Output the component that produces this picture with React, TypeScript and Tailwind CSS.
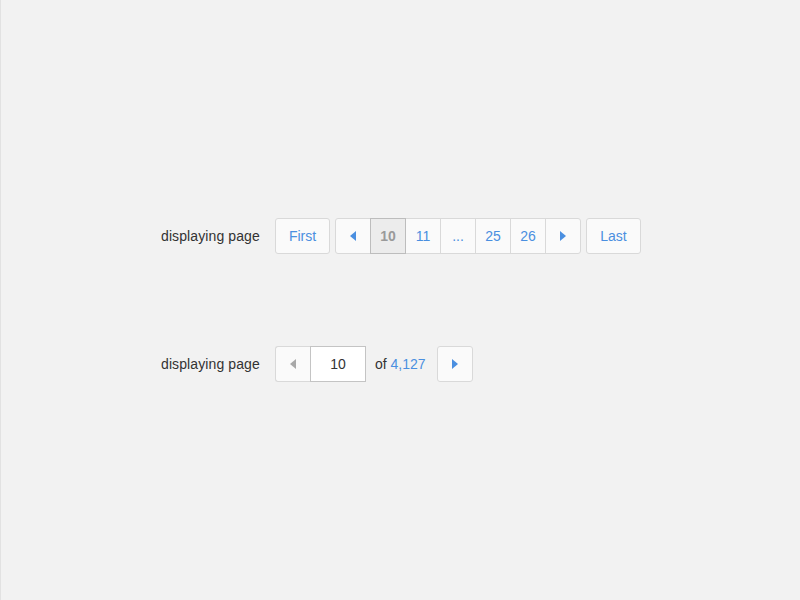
import React from 'react';

const Tri: React.FC<{ dir: 'left' | 'right'; color: string }> = ({ dir, color }) => (
  <svg width="6" height="10" viewBox="0 0 6 10">
    {dir === 'left' ? <path d="M6 0 L0 5 L6 10 Z" fill={color} /> : <path d="M0 0 L6 5 L0 10 Z" fill={color} />}
  </svg>
);

const cell = 'h-full flex items-center justify-center border-l border-[#d9d9d9] text-[14px] text-[#4a8fe0]';

export default function App() {
  return (
    <div className="min-h-[600px] w-[800px] bg-[#f2f2f2] border-l border-[#e2e2e2] pl-[159px] pt-[218px] font-['Liberation_Sans',Arial,sans-serif] text-[#333]">
      <div className="flex items-center h-[36px]">
        <span className="ml-px w-[114px] text-[14px] tracking-[0.1px]">displaying page</span>
        <button className="w-[55px] h-[36px] rounded-[3px] border border-[#d9d9d9] bg-[#fafafa] text-[14px] text-[#4a8fe0]">First</button>
        <div className="ml-[5px] flex h-[36px] rounded-[3px] border border-[#d9d9d9] bg-[#fafafa]">
          <div className="w-[34px] h-full flex items-center justify-center">
            <Tri dir="left" color="#4a8fe0" />
          </div>
          <div className="w-[36px] h-[36px] -my-px flex items-center justify-center border border-[#bdbdbd] bg-[#ececec] text-[14px] font-bold text-[#9a9a9a]">10</div>
          <div className={`${cell} w-[34px] border-l-0`}>11</div>
          <div className={`${cell} w-[35px]`}>...</div>
          <div className={`${cell} w-[35px]`}>25</div>
          <div className={`${cell} w-[35px]`}>26</div>
          <div className={`${cell} w-[35px]`}>
            <Tri dir="right" color="#4a8fe0" />
          </div>
        </div>
        <button className="ml-[5px] w-[55px] h-[36px] rounded-[3px] border border-[#d9d9d9] bg-[#fafafa] text-[14px] text-[#4a8fe0]">Last</button>
      </div>

      <div className="flex items-center h-[36px] mt-[92px]">
        <span className="ml-px w-[114px] text-[14px] tracking-[0.1px]">displaying page</span>
        <div className="flex h-[36px]">
          <div className="w-[35px] h-full flex items-center justify-center rounded-l-[3px] border border-r-0 border-[#d9d9d9] bg-[#fafafa]">
            <Tri dir="left" color="#a8a8a8" />
          </div>
          <div className="w-[56px] h-full flex items-center justify-center border border-[#c4c4c4] bg-white text-[14px] text-[#333]">10</div>
        </div>
        <span className="ml-[9px] text-[14px]">
          of <span className="text-[#4a8fe0]">4,127</span>
        </span>
        <button className="ml-[11px] w-[36px] h-[36px] rounded-[3px] border border-[#d9d9d9] bg-[#fafafa] flex items-center justify-center">
          <Tri dir="right" color="#4a8fe0" />
        </button>
      </div>
    </div>
  );
}
